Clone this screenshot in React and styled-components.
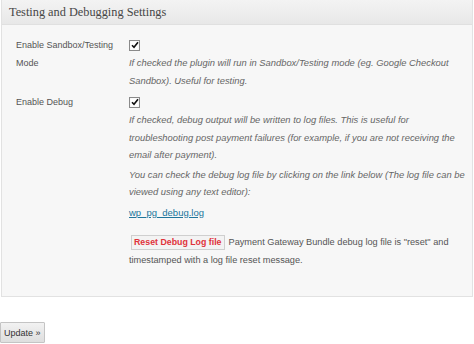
import styled, { createGlobalStyle } from 'styled-components';

const GlobalStyle = createGlobalStyle`
  html, body {
    margin: 0;
    padding: 0;
    background: #ffffff;
  }
  body {
    font-family: "Liberation Sans", Arial, sans-serif;
    font-size: 9px;
    color: #555;
  }
`;

const Page = styled.div`
  width: 474px;
  height: 344px;
  overflow: hidden;
`;

const Panel = styled.div`
  margin: 0 1px 0 1px;
  border: 1px solid #e2e2e2;
  border-top: none;
  background: #f7f7f7;
  height: 297px;
  box-sizing: border-box;
`;

const PanelHeader = styled.h3`
  margin: 0;
  height: 24px;
  padding: 0 7px;
  display: flex;
  align-items: center;
  background: linear-gradient(to bottom, #f3f3f3, #e8e8e8);
  border-bottom: 1px solid #e0e0e0;
  font-family: "Liberation Serif", Georgia, serif;
  font-weight: normal;
  font-size: 12.3px;
  color: #464646;
`;

const FormTable = styled.div`
  display: grid;
  grid-template-columns: 113px 1fr;
  row-gap: 2px;
  padding: 11px 0 0 14px;
`;

const Label = styled.div`
  line-height: 18px;
  color: #555;
  padding-right: 8px;
`;

const Field = styled.div`
  display: flex;
  flex-direction: column;
`;

const CheckRow = styled.div`
  height: 18px;
  display: flex;
  align-items: center;
`;

const CheckBox = styled.span`
  width: 9px;
  height: 9px;
  border: 1px solid #8a8a8a;
  background: #fff;
  display: flex;
  align-items: center;
  justify-content: center;
  box-shadow: inset 0 0 1px #ccc;
`;

const Description = styled.p`
  margin: 0 0 2px;
  font-size: 9.4px;
  font-style: italic;
  line-height: 17.5px;
  color: #666;
`;

const LogLink = styled.a`
  margin-top: 1px;
  font-size: 9.5px;
  line-height: 18px;
  color: #21759b;
  text-decoration: underline;
  align-self: flex-start;
`;

const ResetLine = styled.p`
  margin: 11px 8px 0 0;
  font-size: 9.2px;
  line-height: 18px;
  color: #555;
`;

const ResetButton = styled.button`
  font-family: "Liberation Sans", Arial, sans-serif;
  font-size: 8.8px;
  font-weight: bold;
  color: #e0323a;
  background: #f3f3f3;
  border: 1px solid #cfcfcf;
  padding: 1px 2px;
  margin: 0 4px 0 2px;
  line-height: 11px;
  vertical-align: baseline;
  cursor: pointer;
`;

const Footer = styled.div`
  padding: 25px 0 0 0;
`;

const UpdateButton = styled.button`
  font-family: "Liberation Sans", Arial, sans-serif;
  font-size: 9px;
  color: #333;
  height: 21px;
  padding: 0 3px;
  background: linear-gradient(to bottom, #f2f2f2, #dedede);
  border: 1px solid #c4c4c4;
  border-radius: 1px;
  cursor: pointer;
`;

function Check() {
  return (
    <CheckBox>
      <svg width="8" height="8" viewBox="0 0 8 8">
        <path d="M1 4.2 L3 6.3 L7 1.2" fill="none" stroke="#111" strokeWidth="1.6" />
      </svg>
    </CheckBox>
  );
}

export default function App() {
  return (
    <Page>
      <GlobalStyle />
      <Panel>
        <PanelHeader>Testing and Debugging Settings</PanelHeader>
        <FormTable>
          <Label>Enable Sandbox/Testing Mode</Label>
          <Field>
            <CheckRow>
              <Check />
            </CheckRow>
            <Description>
              If checked the plugin will run in Sandbox/Testing mode (eg. Google Checkout
              Sandbox). Useful for testing.
            </Description>
          </Field>

          <Label>Enable Debug</Label>
          <Field>
            <CheckRow>
              <Check />
            </CheckRow>
            <Description>
              If checked, debug output will be written to log files. This is useful for
              troubleshooting post payment failures (for example, if you are not receiving the
              email after payment).
            </Description>
            <Description>
              You can check the debug log file by clicking on the link below (The log file can be
              viewed using any text editor):
            </Description>
            <LogLink href="#">wp_pg_debug.log</LogLink>
            <ResetLine>
              <ResetButton type="button">Reset Debug Log file</ResetButton>
              Payment Gateway Bundle debug log file is "reset" and timestamped with a log file
              reset message.
            </ResetLine>
          </Field>
        </FormTable>
      </Panel>
      <Footer>
        <UpdateButton type="button">Update »</UpdateButton>
      </Footer>
    </Page>
  );
}
